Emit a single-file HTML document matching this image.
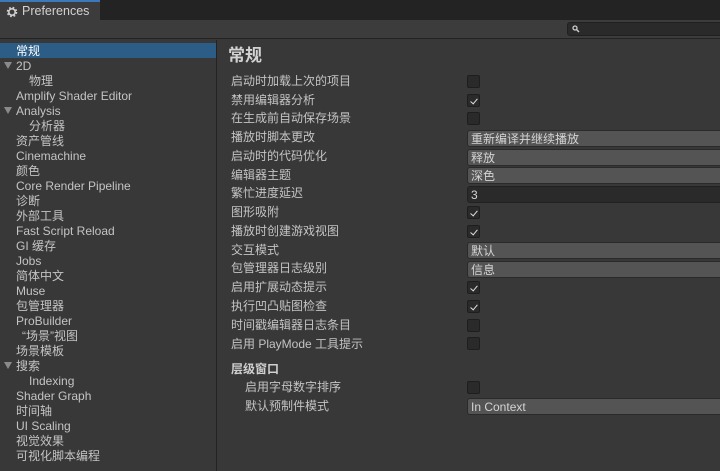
<!DOCTYPE html>
<html><head><meta charset="utf-8"><style>
*{margin:0;padding:0;box-sizing:border-box}
body{width:720px;height:471px;overflow:hidden;background:#383838;font-family:"Liberation Sans","Noto Sans CJK SC",sans-serif;font-size:12px;color:#c4c4c4;position:relative}
.tabbar{position:absolute;left:0;top:0;width:720px;height:20px;background:#232323}
.tab{position:absolute;left:0;top:0;width:100px;height:20px;background:#3c3c3c;border-top:2px solid #3a79bb;color:#d2d2d2;font-size:12.5px;line-height:19px;padding-left:22px}
.gear{position:absolute;left:6px;top:4px}
.toolbar{position:absolute;left:0;top:20px;width:720px;height:19px;background:#3c3c3c;border-bottom:1px solid #232323}
.search{position:absolute;left:567px;top:22px;width:160px;height:14px;background:#2a2a2a;border:1px solid #202020;border-radius:3px}
.left{position:absolute;left:0;top:40px;width:217px;height:431px;border-right:1px solid #232323}
.li{position:absolute;left:16px;height:15px;line-height:16px;white-space:nowrap}
.sel{position:absolute;left:0;top:43px;width:216px;height:15px;background:#2c5d87}
.tri{position:absolute;left:4px;width:0;height:0;border-left:4px solid transparent;border-right:4px solid transparent;border-top:7px solid #8a8a8a}
.title{position:absolute;left:228px;top:41px;font-size:17px;font-weight:bold;color:#d2d2d2}
.lbl{position:absolute;left:231px;height:18px;line-height:19px;white-space:nowrap}
.cb{position:absolute;left:467px;width:13px;height:13px;background:#2a2a2a;border:1px solid #1e1e1e;border-radius:2px}
.cb.on::after{content:"";position:absolute;left:4px;top:1.5px;width:3px;height:6px;border:solid #e0e0e0;border-width:0 1.5px 1.5px 0;transform:rotate(40deg)}
.dd{position:absolute;left:467px;width:260px;height:17px;background:#545454;border:1px solid #2a2a2a;border-radius:3px;line-height:16px;padding-left:3px;color:#d4d4d4}
.fld{position:absolute;left:467px;width:260px;height:17px;background:#2a2a2a;border:1px solid #212121;border-radius:3px;line-height:16px;padding-left:3px;color:#d4d4d4}
</style></head><body>
<div class="tabbar"><div class="tab"><svg class="gear" width="12" height="12" viewBox="0 0 12 12"><circle cx="6" cy="6" r="4" fill="none" stroke="#cfcfcf" stroke-width="2.6" stroke-dasharray="1.6 1.6"/><circle cx="6" cy="6" r="3.2" fill="none" stroke="#cfcfcf" stroke-width="1.6"/></svg>Preferences</div></div>
<div class="toolbar"></div>
<div class="search"><svg width="8" height="8" style="position:absolute;left:4px;top:2px" viewBox="0 0 8 8"><circle cx="3" cy="3" r="2" fill="none" stroke="#ccc" stroke-width="1.3"/><path d="M4.5 4.5L7 7" stroke="#ccc" stroke-width="1.5"/></svg></div>
<div class="left"></div>
<div class="sel"></div>
<div class="li" style="top:43px;color:#fff">常规</div>
<div class="tri" style="top:62px"></div><div class="li" style="top:58px">2D</div>
<div class="li" style="top:73px;left:29px">物理</div>
<div class="li" style="top:88px">Amplify Shader Editor</div>
<div class="tri" style="top:107px"></div><div class="li" style="top:103px">Analysis</div>
<div class="li" style="top:118px;left:29px">分析器</div>
<div class="li" style="top:133px">资产管线</div>
<div class="li" style="top:148px">Cinemachine</div>
<div class="li" style="top:163px">颜色</div>
<div class="li" style="top:178px">Core Render Pipeline</div>
<div class="li" style="top:193px">诊断</div>
<div class="li" style="top:208px">外部工具</div>
<div class="li" style="top:223px">Fast Script Reload</div>
<div class="li" style="top:238px">GI 缓存</div>
<div class="li" style="top:253px">Jobs</div>
<div class="li" style="top:268px">简体中文</div>
<div class="li" style="top:283px">Muse</div>
<div class="li" style="top:298px">包管理器</div>
<div class="li" style="top:313px">ProBuilder</div>
<div class="li" style="top:328px;left:22px">“场景”视图</div>
<div class="li" style="top:343px">场景模板</div>
<div class="tri" style="top:362px"></div><div class="li" style="top:358px">搜索</div>
<div class="li" style="top:373px;left:29px">Indexing</div>
<div class="li" style="top:388px">Shader Graph</div>
<div class="li" style="top:403px">时间轴</div>
<div class="li" style="top:418px">UI Scaling</div>
<div class="li" style="top:433px">视觉效果</div>
<div class="li" style="top:448px">可视化脚本编程</div>

<div class="title">常规</div>
<div class="lbl" style="top:72px">启动时加载上次的项目</div><div class="cb" style="top:75px"></div>
<div class="lbl" style="top:91px">禁用编辑器分析</div><div class="cb on" style="top:94px"></div>
<div class="lbl" style="top:109px">在生成前自动保存场景</div><div class="cb" style="top:112px"></div>
<div class="lbl" style="top:128px">播放时脚本更改</div><div class="dd" style="top:130px">重新编译并继续播放</div>
<div class="lbl" style="top:147px">启动时的代码优化</div><div class="dd" style="top:149px">释放</div>
<div class="lbl" style="top:166px">编辑器主题</div><div class="dd" style="top:167px">深色</div>
<div class="lbl" style="top:184px">繁忙进度延迟</div><div class="fld" style="top:186px">3</div>
<div class="lbl" style="top:203px">图形吸附</div><div class="cb on" style="top:206px"></div>
<div class="lbl" style="top:222px">播放时创建游戏视图</div><div class="cb on" style="top:225px"></div>
<div class="lbl" style="top:241px">交互模式</div><div class="dd" style="top:242px">默认</div>
<div class="lbl" style="top:259px">包管理器日志级别</div><div class="dd" style="top:261px">信息</div>
<div class="lbl" style="top:278px">启用扩展动态提示</div><div class="cb on" style="top:281px"></div>
<div class="lbl" style="top:297px">执行凹凸贴图检查</div><div class="cb on" style="top:300px"></div>
<div class="lbl" style="top:316px">时间戳编辑器日志条目</div><div class="cb" style="top:319px"></div>
<div class="lbl" style="top:335px">启用 PlayMode 工具提示</div><div class="cb" style="top:337px"></div>
<div class="lbl" style="top:360px;font-weight:bold;color:#d0d0d0">层级窗口</div>
<div class="lbl" style="top:378px;left:245px">启用字母数字排序</div><div class="cb" style="top:381px"></div>
<div class="lbl" style="top:397px;left:245px">默认预制件模式</div><div class="dd" style="top:398px">In Context</div>
</body></html>
